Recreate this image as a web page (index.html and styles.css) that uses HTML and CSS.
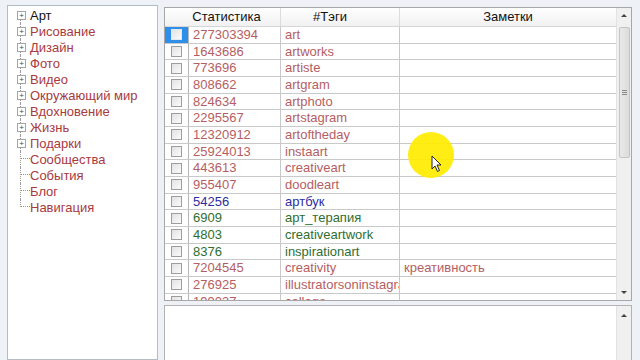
FILE: index.html
```html
<!DOCTYPE html>
<html lang="ru">
<head>
    <meta charset="UTF-8">
    <title>Теги</title>
    <link rel="stylesheet" href="styles.css">
</head>
<body>
    <div class="window">
        <div class="tree">
            <div class="node first"><span class="box">+</span><span class="label dark">Арт</span></div>
            <div class="node"><span class="box">+</span><span class="label">Рисование</span></div>
            <div class="node"><span class="box">+</span><span class="label">Дизайн</span></div>
            <div class="node"><span class="box">+</span><span class="label">Фото</span></div>
            <div class="node"><span class="box">+</span><span class="label">Видео</span></div>
            <div class="node"><span class="box">+</span><span class="label">Окружающий мир</span></div>
            <div class="node"><span class="box">+</span><span class="label">Вдохновение</span></div>
            <div class="node"><span class="box">+</span><span class="label">Жизнь</span></div>
            <div class="node"><span class="box">+</span><span class="label">Подарки</span></div>
            <div class="node leaf"><span class="stub"></span><span class="label">Сообщества</span></div>
            <div class="node leaf"><span class="stub"></span><span class="label">События</span></div>
            <div class="node leaf"><span class="stub"></span><span class="label">Блог</span></div>
            <div class="node leaf last"><span class="stub"></span><span class="label">Навигация</span></div>
        </div>

        <div class="main">
            <div class="grid">
                <div class="table">
                    <div class="head">
                        <div class="th stat">Статистика</div>
                        <div class="th tags">#Тэги</div>
                        <div class="th notes">Заметки</div>
                    </div>
                    <div class="rows">
                        <div class="row selected"><span class="chk"><i></i></span><span>277303394</span><span>art</span><span></span></div>
                        <div class="row"><span class="chk"><i></i></span><span>1643686</span><span>artworks</span><span></span></div>
                        <div class="row"><span class="chk"><i></i></span><span>773696</span><span>artiste</span><span></span></div>
                        <div class="row"><span class="chk"><i></i></span><span>808662</span><span>artgram</span><span></span></div>
                        <div class="row"><span class="chk"><i></i></span><span>824634</span><span>artphoto</span><span></span></div>
                        <div class="row"><span class="chk"><i></i></span><span>2295567</span><span>artstagram</span><span></span></div>
                        <div class="row"><span class="chk"><i></i></span><span>12320912</span><span>artoftheday</span><span></span></div>
                        <div class="row"><span class="chk"><i></i></span><span>25924013</span><span>instaart</span><span></span></div>
                        <div class="row"><span class="chk"><i></i></span><span>443613</span><span>creativeart</span><span></span></div>
                        <div class="row"><span class="chk"><i></i></span><span>955407</span><span>doodleart</span><span></span></div>
                        <div class="row blue"><span class="chk"><i></i></span><span>54256</span><span>артбук</span><span></span></div>
                        <div class="row green"><span class="chk"><i></i></span><span>6909</span><span>арт_терапия</span><span></span></div>
                        <div class="row green"><span class="chk"><i></i></span><span>4803</span><span>creativeartwork</span><span></span></div>
                        <div class="row green"><span class="chk"><i></i></span><span>8376</span><span>inspirationart</span><span></span></div>
                        <div class="row"><span class="chk"><i></i></span><span>7204545</span><span>creativity</span><span>креативность</span></div>
                        <div class="row"><span class="chk"><i></i></span><span>276925</span><span>illustratorsoninstagram</span><span></span></div>
                        <div class="row"><span class="chk"><i></i></span><span>199037</span><span>collage</span><span></span></div>
                    </div>
                </div>
                <div class="scrollbar">
                    <span class="arrow up"></span>
                    <div class="thumb"><span class="grip"></span></div>
                    <span class="arrow down"></span>
                </div>
            </div>

            <div class="memo">
                <div class="memo-text"></div>
                <div class="scrollbar small">
                    <span class="arrow up"></span>
                </div>
            </div>
        </div>
    </div>

    <div class="pointer">
        <svg width="12" height="18" viewBox="0 0 12 18">
            <path d="M1 1 L1 14 L4 11 L6.5 16.5 L8.5 15.5 L6 10 L10 10 Z" fill="#fff" stroke="#222" stroke-width="1"/>
        </svg>
    </div>
</body>
</html>
```

FILE: styles.css
```css
body {
    margin: 0;
    width: 640px;
    height: 360px;
    overflow: hidden;
    background: #eef1f5;
    font-family: "Liberation Sans", Arial, sans-serif;
    font-size: 13px;
    position: relative;
}
.window {
    display: flex;
    gap: 6px;
    height: 360px;
    padding: 5px 8px 0 7px;
    box-sizing: border-box;
    border-left: 3px solid #c6d3e3;
    margin-left: -3px;
}

/* tree */
.tree {
    width: 151px;
    flex: none;
    background: #fff;
    border: 1px solid #b4bcc6;
    box-sizing: border-box;
    padding-top: 1px;
}
.node {
    height: 16px;
    display: flex;
    align-items: center;
    position: relative;
    padding-left: 9px;
    white-space: nowrap;
}
.node::before {
    content: "";
    position: absolute;
    left: 12px;
    top: 0;
    bottom: 0;
    border-left: 1px dotted #9a9a9a;
}
.node.first::before { top: 8px; }
.node.last::before { bottom: 8px; }
.box {
    width: 7px;
    height: 7px;
    border: 1px solid #a5a5a5;
    background: #fff;
    font-size: 8px;
    line-height: 7px;
    text-align: center;
    color: #444;
    position: relative;
    z-index: 1;
    margin-right: 4px;
}
.stub {
    width: 9px;
    height: 1px;
    border-top: 1px dotted #9a9a9a;
    margin-left: 4px;
    margin-right: 0;
}
.label {
    color: #a83a3e;
    margin-left: 0;
}
.label.dark { color: #111; }

/* grid */
.main {
    flex: 1;
    display: flex;
    flex-direction: column;
    gap: 4px;
    padding-top: 2px;
}
.grid {
    height: 294px;
    display: flex;
    border: 1px solid #a7a7a7;
    box-sizing: border-box;
    background: #fff;
}
.table {
    flex: 1;
    overflow: hidden;
}
.head {
    display: flex;
    height: 19px;
    background: linear-gradient(#ffffff, #f1f1f1);
    border-bottom: 1px solid #d6d6d6;
    box-sizing: border-box;
    color: #111;
}
.th {
    line-height: 18px;
    text-align: center;
    border-right: 1px solid #dcdcdc;
}
.th.stat { width: 116px; padding-left: 8px; box-sizing: border-box; }
.th.tags { width: 119px; padding-right: 20px; box-sizing: border-box; }
.th.notes { flex: 1; border-right: none; }

.row {
    display: grid;
    grid-template-columns: 24px 92px 119px 1fr;
    height: 16.67px;
    border-bottom: 1px solid #c9c9c9;
    box-sizing: border-box;
    color: #b55e62;
}
.row span {
    border-right: 1px solid #c9c9c9;
    line-height: 15px;
    padding-left: 4px;
    white-space: nowrap;
    overflow: hidden;
}
.row span:last-child { border-right: none; }
.row .chk {
    padding: 0;
    display: flex;
    align-items: center;
    justify-content: center;
    border-right: 1px solid #b5b5b5;
}
.chk i {
    width: 9px;
    height: 9px;
    border: 1px solid #9d9d9d;
    background: linear-gradient(135deg, #e2e2e2, #fbfbfb);
}
.row.selected .chk { background: #2f8ee8; }
.row.selected .chk i { border-color: #dfe9f3; }
.row.blue { color: #2e2ea0; }
.row.green { color: #2f6e2f; }

.scrollbar {
    width: 14px;
    flex: none;
    background: #f0f0f0;
    border-left: 1px solid #e2e2e2;
    display: flex;
    flex-direction: column;
    align-items: center;
}
.arrow {
    width: 0;
    height: 0;
    border-left: 3px solid transparent;
    border-right: 3px solid transparent;
    margin: 6px 0;
}
.arrow.up { border-bottom: 3px solid #444; }
.arrow.down { border-top: 3px solid #444; margin-top: auto; }
.thumb {
    width: 11px;
    height: 131px;
    margin-top: 4px;
    background: linear-gradient(90deg, #e9e9e9, #dcdcdc);
    border: 1px solid #c4c4c4;
    border-radius: 2px;
    box-sizing: border-box;
    display: flex;
    align-items: center;
    justify-content: center;
}
.grip {
    width: 5px;
    height: 5px;
    border-top: 1px solid #8a8a8a;
    border-bottom: 1px solid #8a8a8a;
    box-sizing: border-box;
    position: relative;
}
.grip::after {
    content: "";
    position: absolute;
    left: 0;
    right: 0;
    top: 1px;
    border-top: 1px solid #8a8a8a;
}

.memo {
    flex: 1;
    display: flex;
    background: #fff;
    border: 1px solid #b3b3b3;
    border-bottom: none;
}
.memo-text { flex: 1; }
.scrollbar.small .arrow.up { margin-top: 8px; }

/* cursor highlight over the grid */
.pointer {
    position: absolute;
    left: 408px;
    top: 132px;
    width: 46px;
    height: 46px;
    border-radius: 50%;
    background: rgba(255, 236, 0, 0.92);
}
.pointer svg {
    position: absolute;
    left: 23px;
    top: 23px;
}
```
